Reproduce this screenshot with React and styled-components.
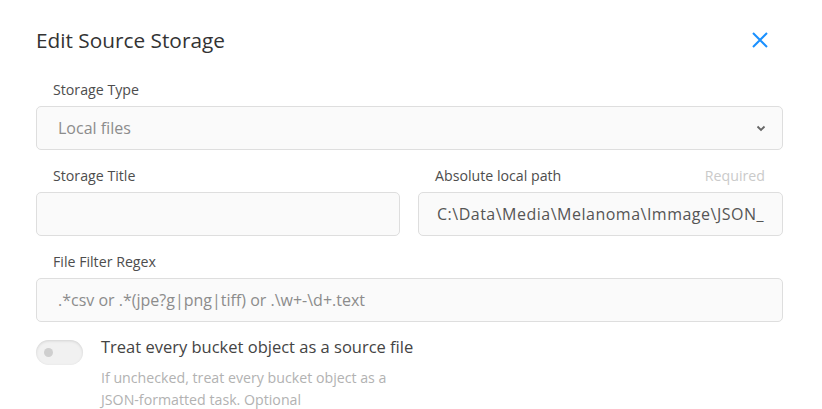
import React from 'react';
import styled, { createGlobalStyle } from 'styled-components';

const Global = createGlobalStyle`
  html, body {
    margin: 0;
    padding: 0;
    background: #ffffff;
  }
  body {
    font-family: "Open Sans", "Noto Sans", sans-serif;
    -webkit-font-smoothing: antialiased;
  }
  * { box-sizing: border-box; }
`;

const Modal = styled.div`
  width: 822px;
  height: 409px;
  padding: 24px 36px 0 36px;
  background: #fff;
  overflow: hidden;
`;

const Header = styled.div`
  display: flex;
  align-items: center;
  justify-content: space-between;
  height: 32px;
  padding-right: 18px;
`;

const Title = styled.h2`
  margin: 0;
  font-size: 20.8px;
  font-weight: 400;
  color: #333;
  line-height: 32px;
`;

const Close = styled.button`
  border: none;
  background: none;
  padding: 0;
  width: 16px;
  height: 16px;
  display: flex;
  align-items: center;
  justify-content: center;
  cursor: pointer;
`;

const Form = styled.div`
  margin-top: 21px;
  width: 747px;
  display: flex;
  flex-direction: column;
`;

const Row = styled.div`
  display: grid;
  grid-template-columns: 364px 365px;
  column-gap: 18px;
`;

const Field = styled.div`
  display: flex;
  flex-direction: column;
  margin-bottom: ${p => p.$mb ?? 13}px;
`;

const LabelRow = styled.div`
  display: flex;
  justify-content: space-between;
  align-items: center;
  height: 29px;
  padding: 0 18px 4px 17px;
`;

const Label = styled.span`
  font-size: 14.2px;
  color: #4d4d4d;
`;

const Required = styled.span`
  font-size: 14.2px;
  color: #cacaca;
`;

const Box = styled.div`
  height: 44px;
  border: 1px solid #dedede;
  border-radius: 5px;
  background: #fafafa;
  display: flex;
  align-items: center;
  justify-content: space-between;
  padding: 0 16px 0 ${p => p.$indent ?? 21}px;
  font-size: 16px;
  letter-spacing: ${p => p.$spacing ?? 0}px;
  color: ${p => (p.$muted ? '#8c8c8c' : '#555')};
  white-space: nowrap;
  overflow: hidden;
`;

const ToggleRow = styled.div`
  display: flex;
  align-items: flex-start;
  gap: 18px;
  margin-top: 18px;
`;

const Switch = styled.div`
  position: relative;
  flex: none;
  width: 47px;
  height: 25px;
  border-radius: 13px;
  background: #f1f1f1;
  box-shadow: inset 0 1px 3px rgba(0, 0, 0, 0.13);
  &::after {
    content: '';
    position: absolute;
    left: 8px;
    top: 8px;
    width: 9px;
    height: 9px;
    border-radius: 50%;
    background: #cfcfcf;
  }
`;

const ToggleText = styled.div`
  display: flex;
  flex-direction: column;
`;

const ToggleTitle = styled.div`
  font-size: 16.5px;
  color: #444;
  line-height: 22px;
  margin-top: -4px;
`;

const Hint = styled.div`
  margin-top: 9px;
  width: 305px;
  font-size: 14.2px;
  line-height: 22px;
  color: #b2b2b2;
`;

function Chevron() {
  return (
    <svg width="10" height="7" viewBox="0 0 10 7">
      <path d="M1.5 1.5 L5 5 L8.5 1.5" fill="none" stroke="#666" strokeWidth="1.8" />
    </svg>
  );
}

function CloseIcon() {
  return (
    <svg width="16" height="16" viewBox="0 0 16 16">
      <path d="M1 1 L15 15 M15 1 L1 15" stroke="#1a90ff" strokeWidth="2" fill="none" />
    </svg>
  );
}

export default function App() {
  return (
    <>
      <Global />
      <Modal>
        <Header>
          <Title>Edit Source Storage</Title>
          <Close aria-label="Close"><CloseIcon /></Close>
        </Header>
        <Form>
          <Field>
            <LabelRow><Label>Storage Type</Label></LabelRow>
            <Box $muted>
              <span>Local files</span>
              <Chevron />
            </Box>
          </Field>
          <Row>
            <Field>
              <LabelRow><Label>Storage Title</Label></LabelRow>
              <Box />
            </Field>
            <Field>
              <LabelRow><Label>Absolute local path</Label><Required>Required</Required></LabelRow>
              <Box $indent={18} $spacing={0.5}>C:\Data\Media\Melanoma\Immage\JSON_</Box>
            </Field>
          </Row>
          <Field $mb={0}>
            <LabelRow><Label>File Filter Regex</Label></LabelRow>
            <Box $muted>.*csv or .*(jpe?g|png|tiff) or .\w+-\d+.text</Box>
          </Field>
          <ToggleRow>
            <Switch />
            <ToggleText>
              <ToggleTitle>Treat every bucket object as a source file</ToggleTitle>
              <Hint>If unchecked, treat every bucket object as a JSON-formatted task. Optional</Hint>
            </ToggleText>
          </ToggleRow>
        </Form>
      </Modal>
    </>
  );
}
